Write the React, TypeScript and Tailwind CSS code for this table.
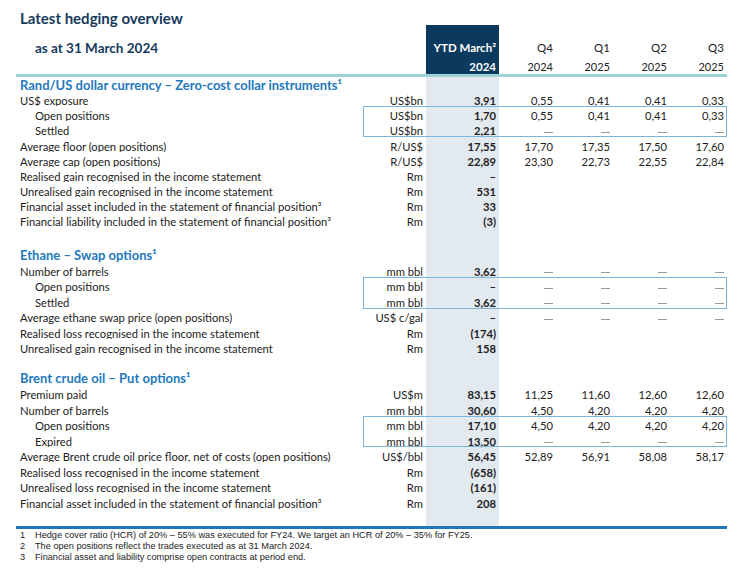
import type { ReactNode } from 'react';

type Row = {
  label: string;
  indent?: boolean;
  unit: string;
  ytd: string;
  q?: string[];
};

type Section = {
  title: string;
  gap: string; // spacer above section header
  rowH: string;
  rows: (Row | Row[])[];
};

const D = '–';
const Q = '—';
const dashes = [Q, Q, Q, Q];

const sections: Section[] = [
  {
    title: 'Rand/US dollar currency – Zero-cost collar instruments¹',
    gap: 'h-0',
    rowH: 'h-[15.2px]',
    rows: [
      { label: 'US$ exposure', unit: 'US$bn', ytd: '3,91', q: ['0,55', '0,41', '0,41', '0,33'] },
      [
        { label: 'Open positions', indent: true, unit: 'US$bn', ytd: '1,70', q: ['0,55', '0,41', '0,41', '0,33'] },
        { label: 'Settled', indent: true, unit: 'US$bn', ytd: '2,21', q: dashes },
      ],
      { label: 'Average floor (open positions)', unit: 'R/US$', ytd: '17,55', q: ['17,70', '17,35', '17,50', '17,60'] },
      { label: 'Average cap (open positions)', unit: 'R/US$', ytd: '22,89', q: ['23,30', '22,73', '22,55', '22,84'] },
      { label: 'Realised gain recognised in the income statement', unit: 'Rm', ytd: D },
      { label: 'Unrealised gain recognised in the income statement', unit: 'Rm', ytd: '531' },
      { label: 'Financial asset included in the statement of financial position³', unit: 'Rm', ytd: '33' },
      { label: 'Financial liability included in the statement of financial position³', unit: 'Rm', ytd: '(3)' },
    ],
  },
  {
    title: 'Ethane – Swap options¹',
    gap: 'h-[18px]',
    rowH: 'h-[15.5px]',
    rows: [
      { label: 'Number of barrels', unit: 'mm bbl', ytd: '3,62', q: dashes },
      [
        { label: 'Open positions', indent: true, unit: 'mm bbl', ytd: D, q: dashes },
        { label: 'Settled', indent: true, unit: 'mm bbl', ytd: '3,62', q: dashes },
      ],
      { label: 'Average ethane swap price (open positions)', unit: 'US$ c/gal', ytd: D, q: dashes },
      { label: 'Realised loss recognised in the income statement', unit: 'Rm', ytd: '(174)' },
      { label: 'Unrealised gain recognised in the income statement', unit: 'Rm', ytd: '158' },
    ],
  },
  {
    title: 'Brent crude oil – Put options¹',
    gap: 'h-[14.3px]',
    rowH: 'h-[15.5px]',
    rows: [
      { label: 'Premium paid', unit: 'US$m', ytd: '83,15', q: ['11,25', '11,60', '12,60', '12,60'] },
      { label: 'Number of barrels', unit: 'mm bbl', ytd: '30,60', q: ['4,50', '4,20', '4,20', '4,20'] },
      [
        { label: 'Open positions', indent: true, unit: 'mm bbl', ytd: '17,10', q: ['4,50', '4,20', '4,20', '4,20'] },
        { label: 'Expired', indent: true, unit: 'mm bbl', ytd: '13,50', q: dashes },
      ],
      { label: 'Average Brent crude oil price floor, net of costs (open positions)', unit: 'US$/bbl', ytd: '56,45', q: ['52,89', '56,91', '58,08', '58,17'] },
      { label: 'Realised loss recognised in the income statement', unit: 'Rm', ytd: '(658)' },
      { label: 'Unrealised loss recognised in the income statement', unit: 'Rm', ytd: '(161)' },
      { label: 'Financial asset included in the statement of financial position³', unit: 'Rm', ytd: '208' },
    ],
  },
];

const qWidths = ['w-[54px]', 'w-[57px]', 'w-[57px]', 'w-[57px]'];

/** 한 줄: 라벨 | 단위 | YTD(음영) | 분기 4칸 */
function Line({ h, children, ytd, q }: { h: string; children?: ReactNode; ytd?: ReactNode; q?: ReactNode[] }) {
  return (
    <div className={`flex items-stretch pl-[4px] pr-[3px] ${h}`}>
      <div className="flex w-[403px] items-center">{children}</div>
      <div className="w-[3px]" />
      <div className="flex w-[73px] items-center justify-end bg-[#e2e9ef] pr-[3px] font-bold">{ytd}</div>
      {qWidths.map((w, i) => (
        <div key={i} className={`flex items-center justify-end ${w}`}>
          {q?.[i] === Q ? <div className="mt-[3px] h-0 w-[9px] border-t border-[#9a9a9a]" /> : q?.[i]}
        </div>
      ))}
    </div>
  );
}

function DataRow({ row, h }: { row: Row; h: string }) {
  return (
    <Line h={h} ytd={row.ytd} q={row.q}>
      <span className={`w-[343px] truncate ${row.indent ? 'pl-[15px]' : ''}`}>{row.label}</span>
      <span className="w-[60px] text-right">{row.unit}</span>
    </Line>
  );
}

export default function App() {
  return (
    <div className="h-[578px] w-[744px] overflow-hidden bg-white text-[11.2px] leading-none text-[#222] [font-family:Lato,'Noto_Sans',sans-serif]">
      <div className="h-[25px] pt-[9px] pl-[20px] text-[15px] leading-[18px] font-bold text-[#163a5c]">
        Latest hedging overview
      </div>

      <div className="ml-[16px] w-[711px]">
        {/* column header */}
        <div className="flex h-[49px] items-stretch pl-[4px] pr-[3px]">
          <div className="w-[403px] pt-[15px] pl-[15px] text-[13.5px] leading-[16px] font-bold text-[#163a5c]">
            as at 31 March 2024
          </div>
          <div className="w-[3px]" />
          <div className="flex w-[73px] flex-col items-end bg-[#0c3a5e] pt-[15px] pr-[3px] font-bold text-white">
            <span className="h-[16px] text-[11.5px] leading-[16px]">YTD March²</span>
            <span className="mt-[4px] h-[14px] text-[11.5px] leading-[14px]">2024</span>
          </div>
          {[
            ['Q4', '2024'],
            ['Q1', '2025'],
            ['Q2', '2025'],
            ['Q3', '2025'],
          ].map(([a, b], i) => (
            <div key={a} className={`flex flex-col items-end pt-[15px] ${qWidths[i]}`}>
              <span className="h-[16px] text-[11.5px] leading-[16px]">{a}</span>
              <span className="mt-[4px] h-[14px] text-[11px] leading-[14px]">{b}</span>
            </div>
          ))}
        </div>
        <div className="h-[3px] bg-[#9dd3d6]" />

        {sections.map((s) => (
          <div key={s.title}>
            <Line h={s.gap} />
            <Line h="h-[16px]">
              <span className="text-[13px] font-bold text-[#2479bd]">{s.title}</span>
            </Line>
            {s.rows.map((r, i) =>
              Array.isArray(r) ? (
                <div key={i} className="relative">
                  {r.map((g) => (
                    <DataRow key={g.label} row={g} h={s.rowH} />
                  ))}
                  <div className="pointer-events-none absolute top-[-2px] right-0 bottom-[1.5px] left-[347px] border border-[#7db4dc]" />
                </div>
              ) : (
                <DataRow key={i} row={r} h={s.rowH} />
              ),
            )}
          </div>
        ))}
        <Line h="h-[14.7px]" />
        <div className="h-[3px] bg-[#2178b8]" />
      </div>

      <div className="mt-[1px] pl-[20px] text-[9.2px] leading-[11px] text-[#222] [font-family:'Liberation_Sans_Narrow','Liberation_Sans',sans-serif]">
        {[
          'Hedge cover ratio (HCR) of 20% – 55% was executed for FY24. We target an HCR of 20% – 35% for FY25.',
          'The open positions reflect the trades executed as at 31 March 2024.',
          'Financial asset and liability comprise open contracts at period end.',
        ].map((t, i) => (
          <div key={i} className="flex h-[11px]">
            <span className="w-[15px]">{i + 1}</span>
            <span>{t}</span>
          </div>
        ))}
      </div>
    </div>
  );
}
